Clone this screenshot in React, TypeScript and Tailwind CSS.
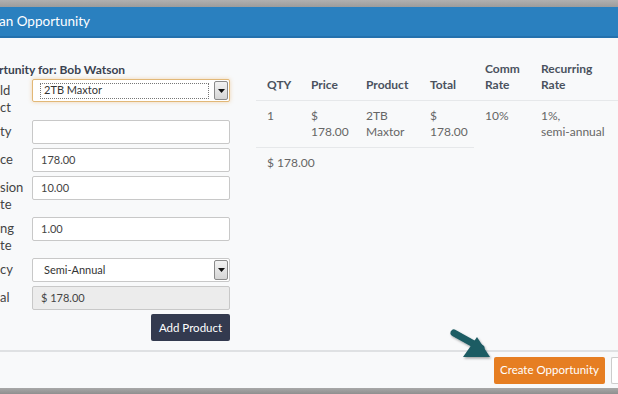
import React from "react";

const font = { fontFamily: "Lato, 'Open Sans', sans-serif" };

function Caret() {
  return (
    <div className="flex h-full w-[14px] items-center justify-center rounded-[2px] border border-[#8a8a8a] bg-gradient-to-b from-[#f2f2f2] to-[#d6d6d6]">
      <svg width="7" height="4" viewBox="0 0 7 4">
        <path d="M0 0 L7 0 L3.5 4 Z" fill="#111" />
      </svg>
    </div>
  );
}

function Row({ label, children }: { label: React.ReactNode; children: React.ReactNode }) {
  return (
    <div className="mb-[4px] flex items-start">
      <div className="w-[32px] shrink-0 pt-[3px] text-[13px] leading-[17px] text-[#444]">{label}</div>
      <div className="w-[198px]">{children}</div>
    </div>
  );
}

function Input({ value, disabled }: { value?: string; disabled?: boolean }) {
  return (
    <div
      className={`flex h-[24px] items-center rounded-[2px] border border-[#c8c8c8] pl-[8px] text-[11px] text-[#444] ${
        disabled ? "bg-[#ececec]" : "bg-white"
      }`}
    >
      {value}
    </div>
  );
}

export default function App() {
  return (
    <div className="relative flex h-[394px] w-[618px] flex-col overflow-hidden bg-[#f8f9fa]" style={font}>
      <div className="h-[7px] shrink-0 bg-gradient-to-b from-[#b0b0b0] to-[#9c9c9c]" />
      <div className="flex h-[31px] shrink-0 items-center border-b-2 border-[#2471ad] bg-[#2a80bf] text-[13.5px] text-white">
        <span className="-ml-[1px]">an Opportunity</span>
      </div>
      <div className="flex flex-1 pt-[23px]">
        <div className="w-[230px] shrink-0">
          <div className="-ml-[1px] mb-[1px] text-[12px] font-bold leading-[17px] text-[#3a4250]">
            rtunity for: Bob Watson
          </div>
          <Row label={<><div>ld</div><div>ct</div></>}>
            <div className="flex h-[23px] items-center rounded-[2px] border border-[#e2b877] bg-white py-[1px] pl-[7px] pr-[1px] shadow-[0_0_4px_rgba(230,170,90,0.45)]">
              <div className="flex h-[16px] w-[169px] items-center border border-dotted border-[#777] pl-[3px] text-[11px] text-[#333]">
                2TB Maxtor
              </div>
              <div className="flex-1" />
              <Caret />
            </div>
          </Row>
          <Row label="ty">
            <Input />
          </Row>
          <Row label="ce">
            <Input value="178.00" />
          </Row>
          <Row label={<><div>sion</div><div>te</div></>}>
            <Input value="10.00" />
          </Row>
          <Row label={<><div>ng</div><div>te</div></>}>
            <Input value="1.00" />
          </Row>
          <Row label="cy">
            <div className="flex h-[24px] items-center rounded-[2px] border border-[#c8c8c8] bg-white py-[1px] pl-[11px] pr-[1px] text-[11px] text-[#333]">
              <span className="flex-1">Semi-Annual</span>
              <Caret />
            </div>
          </Row>
          <Row label="al">
            <Input value="$ 178.00" disabled />
          </Row>
          <div className="mt-[1px] flex justify-end">
            <button className="h-[27px] w-[79px] rounded-[2px] bg-[#333a4f] text-[11.5px] text-white">Add Product</button>
          </div>
        </div>
        <div className="ml-[26px] flex-1">
          <table className="w-[374px] table-fixed border-collapse text-[12px] leading-[16px]">
            <colgroup>
              <col className="w-[44px]" />
              <col className="w-[55px]" />
              <col className="w-[64px]" />
              <col className="w-[55px]" />
              <col className="w-[56px]" />
              <col className="w-[100px]" />
            </colgroup>
            <thead>
              <tr className="border-b border-[#e6e8ea] text-left align-bottom font-bold text-[#4a525e]">
                <th className="pb-[7px] pl-[11px] pt-[1px]">QTY</th>
                <th className="pb-[7px] pl-[11px]">Price</th>
                <th className="pb-[7px] pl-[11px]">Product</th>
                <th className="pb-[7px] pl-[11px]">Total</th>
                <th className="pb-[7px] pl-[11px]">Comm<br />Rate</th>
                <th className="pb-[7px] pl-[11px]">Recurring<br />Rate</th>
              </tr>
            </thead>
            <tbody className="text-[#666]">
              <tr className="align-top">
                <td className="border-b border-[#e6e8ea] pb-[7px] pl-[11px] pt-[7px]">1</td>
                <td className="border-b border-[#e6e8ea] pb-[7px] pl-[11px] pt-[7px]">$<br />178.00</td>
                <td className="border-b border-[#e6e8ea] pb-[7px] pl-[11px] pt-[7px]">2TB<br />Maxtor</td>
                <td className="border-b border-[#e6e8ea] pb-[7px] pl-[11px] pt-[7px]">$<br />178.00</td>
                <td className="pb-[7px] pl-[11px] pt-[7px]">10%</td>
                <td className="pb-[7px] pl-[11px] pt-[7px] whitespace-nowrap">1%,<br />semi-annual</td>
              </tr>
              <tr>
                <td colSpan={2} className="pl-[11px] pt-[7px] whitespace-nowrap">$ 178.00</td>
              </tr>
            </tbody>
          </table>
        </div>
      </div>
      <div className="flex h-[38px] shrink-0 items-center justify-end gap-[6px] border-t-2 border-[#dfe1e3] pr-0">
        <button className="h-[27px] w-[111px] rounded-[2px] bg-[#e67e22] text-[11.5px] text-white">Create Opportunity</button>
        <div className="h-[27px] w-[7px] rounded-l-[2px] border border-r-0 border-[#ccc] bg-white" />
      </div>
      <div className="h-[6px] shrink-0 bg-gradient-to-b from-[#a8a8a8] to-[#8f8f8f]" />
      <svg className="absolute left-[448px] top-[328px]" width="50" height="34" viewBox="0 0 50 34">
        <defs>
          <filter id="sh" x="-20%" y="-20%" width="140%" height="140%">
            <feDropShadow dx="1" dy="1.5" stdDeviation="1" floodColor="#000" floodOpacity="0.35" />
          </filter>
        </defs>
        <g filter="url(#sh)">
          <line x1="6" y1="5" x2="33" y2="20" stroke="#1e5b63" strokeWidth="7" strokeLinecap="round" />
          <path d="M29 9 L42 29 L15 29 Z" fill="#1e5b63" />
        </g>
      </svg>
    </div>
  );
}
